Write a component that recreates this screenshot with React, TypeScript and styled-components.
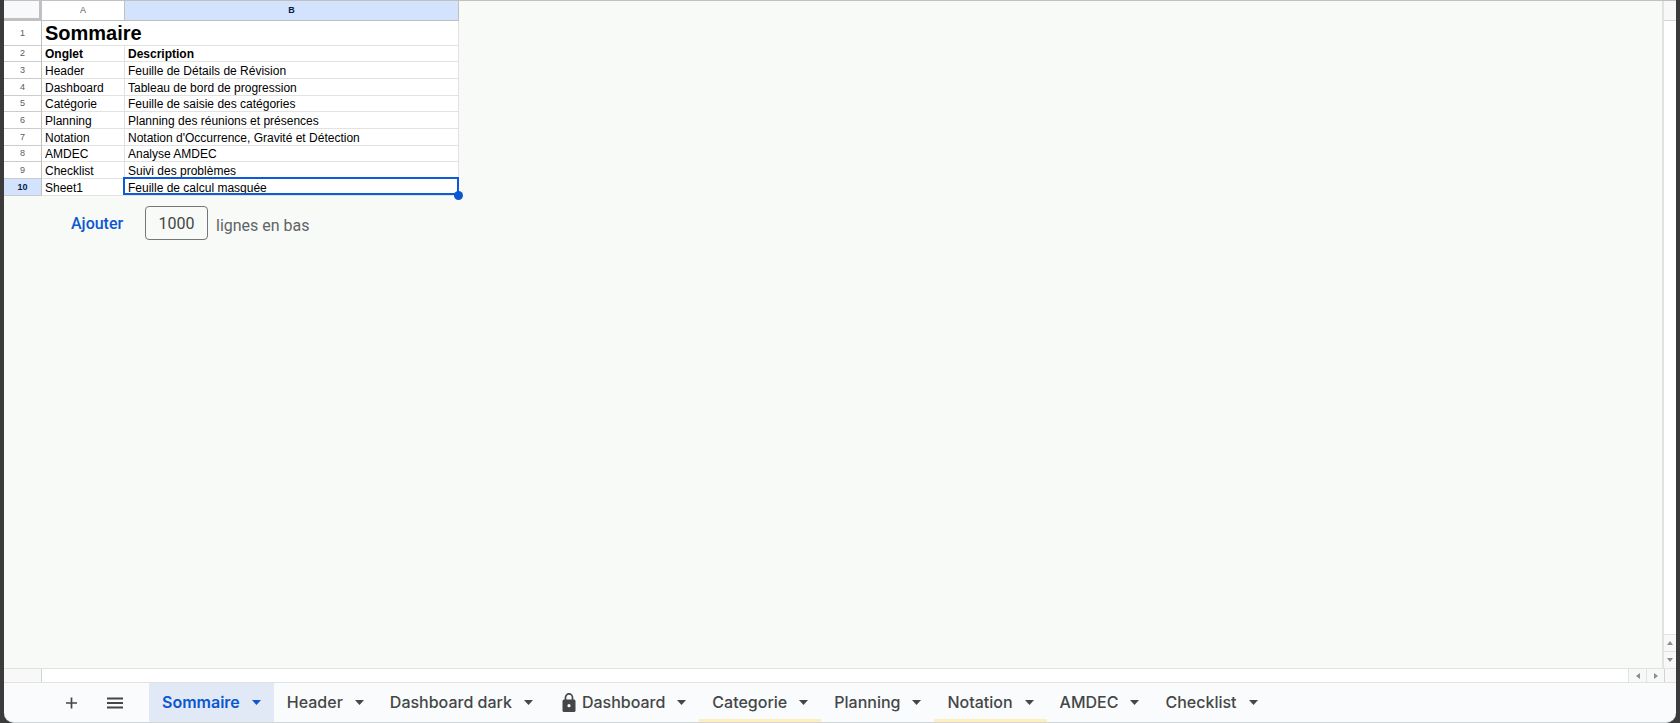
import React from "react";
import styled, { createGlobalStyle } from "styled-components";

const GlobalStyle = createGlobalStyle`
  *, *::before, *::after { box-sizing: border-box; }
  body { margin: 0; background: #3c3b3b; font-family: "Liberation Sans", Arial, sans-serif; }
  button, input { font: inherit; color: inherit; }
`;

const LINE = "#e1e3e1";

const Frame = styled.div`
  background: #3c3b3b;
  padding: 0 4px;
`;

const Window = styled.div`
  display: flex;
  flex-direction: column;
  min-height: 100vh;
  overflow: hidden;
  background: #f9fbfd;
  border-top: 1px solid #c0c0c0;
  border-bottom: 1px solid #d3d6d9;
  border-radius: 0 0 10px 10px;
`;

const Body = styled.div`
  flex: 1;
  display: flex;
`;

const Sheet = styled.main`
  flex: 1;
  background: #f8faf7;
`;

const Table = styled.table`
  table-layout: fixed;
  width: 455px;
  border-collapse: separate;
  border-spacing: 0;
  background: #fff;
  font-size: 12px;
  line-height: 13px;
  color: #000;
`;

const Corner = styled.td`
  width: 38px;
  height: 20px;
  padding: 0;
  background: #f8f9fa;
  border-right: 3px solid #c0c0c0;
  border-bottom: 3px solid #c0c0c0;
`;

const ColHead = styled.th<{ $active?: boolean; $width: number }>`
  width: ${(p) => p.$width}px;
  height: 20px;
  padding: 0 0 2px;
  font-size: 9px;
  line-height: 16px;
  font-weight: ${(p) => (p.$active ? 700 : 400)};
  color: ${(p) => (p.$active ? "#041e49" : "#575b5f")};
  background: ${(p) => (p.$active ? "#d3e3fd" : "#fff")};
  border-right: 1px solid #c0c0c0;
  border-bottom: 1px solid #c0c0c0;
`;

const RowHead = styled.th<{ $active?: boolean }>`
  padding: 0;
  font-size: 9px;
  line-height: 13px;
  vertical-align: middle;
  font-weight: ${(p) => (p.$active ? 700 : 400)};
  color: ${(p) => (p.$active ? "#041e49" : "#575b5f")};
  background: ${(p) => (p.$active ? "#d3e3fd" : "#fff")};
  border-right: 1px solid #c0c0c0;
  border-bottom: 1px solid #c9cbcc;
`;

const Cell = styled.td`
  position: relative;
  padding: 0 3px;
  vertical-align: bottom;
  white-space: nowrap;
  border-right: 1px solid ${LINE};
  border-bottom: 1px solid ${LINE};
`;

const Row = styled.tr<{ $kind?: "title" | "head" }>`
  height: 17px;
  font-weight: ${(p) => (p.$kind ? 700 : 400)};
  &:nth-child(3n + 2) { height: 16px; }
  &:first-child { height: 25px; font-size: 20px; line-height: 24px; }
`;

const Selection = styled.span`
  position: absolute;
  inset: -2px -1px 0 -2px;
  border: 2px solid #0b5bdc;
`;

const FillHandle = styled.span`
  position: absolute;
  right: -5px;
  bottom: -5px;
  width: 9px;
  height: 9px;
  border-radius: 50%;
  background: #0b57d0;
`;

const AddRows = styled.form`
  display: flex;
  align-items: center;
  padding: 10px 0 0 67px;
  font-family: Roboto, sans-serif;
  font-size: 16px;
  color: #5f6368;
`;

const AddButton = styled.button`
  padding: 0;
  width: 52px;
  border: 0;
  background: none;
  font-weight: 500;
  color: #0b57d0;
  cursor: pointer;
`;

const CountInput = styled.input`
  width: 63px;
  height: 34px;
  margin: 0 8px 0 22px;
  padding: 0;
  text-align: center;
  color: #444746;
  background: transparent;
  border: 1px solid #747775;
  border-radius: 4px;
`;

const AddLabel = styled.label`
  padding-top: 4px;
`;

const VScroll = styled.div`
  width: 14px;
  display: flex;
  flex-direction: column;
  background: #fff;
  border-left: 2px solid ${LINE};
`;

const VCap = styled.div`
  height: 20px;
  background: #f8f8f8;
  border-bottom: 1px solid #d5d7d8;
`;

const Track = styled.div`
  flex: 1;
`;

const ScrollButton = styled.button<{ $axis: "x" | "y" }>`
  display: flex;
  align-items: center;
  justify-content: center;
  padding: 0;
  width: ${(p) => (p.$axis === "x" ? "18px" : "100%")};
  height: ${(p) => (p.$axis === "x" ? "100%" : "17px")};
  background: #f8f8f8;
  color: #8b8d8e;
  border: 0 solid ${LINE};
  border-top-width: ${(p) => (p.$axis === "y" ? 1 : 0)}px;
  border-left-width: ${(p) => (p.$axis === "x" ? 1 : 0)}px;
`;

const HScroll = styled.div`
  display: flex;
  height: 14px;
  background: #fff;
  border-top: 1px solid ${LINE};
`;

const HCap = styled.div<{ $end?: boolean }>`
  width: ${(p) => (p.$end ? 12 : 38)}px;
  background: #f8f8f8;
  border: 0 solid #d0d2d3;
  border-width: ${(p) => (p.$end ? "0 0 0 1px" : "0 1px 0 0")};
`;

const TabBar = styled.nav`
  display: flex;
  height: 40px;
  border-top: 1px solid ${LINE};
  font-family: Inter, Roboto, sans-serif;
  font-size: 16px;
  color: #444746;
`;

const Tools = styled.div`
  display: flex;
  align-items: center;
  gap: 26px;
  width: 145px;
  padding-left: 59px;
`;

const IconButton = styled.button`
  display: flex;
  padding: 0;
  border: 0;
  background: none;
  cursor: pointer;
`;

const Tab = styled.button<{ $active?: boolean; $marked?: boolean }>`
  display: flex;
  align-items: center;
  padding: 2px 13px 0 13px;
  border: 0;
  border-bottom: 3px solid ${(p) => (p.$marked ? "#ffeebf" : p.$active ? "#e1e9f7" : "transparent")};
  background: ${(p) => (p.$active ? "#e1e9f7" : "transparent")};
  color: ${(p) => (p.$active ? "#0b57d0" : "inherit")};
  font-weight: ${(p) => (p.$active ? 600 : 500)};
  white-space: nowrap;
  cursor: pointer;
  svg:last-child { margin-left: 12px; }
`;

const rows: [string, string][] = [
  ["Sommaire", ""],
  ["Onglet", "Description"],
  ["Header", "Feuille de Détails de Révision"],
  ["Dashboard", "Tableau de bord de progression"],
  ["Catégorie", "Feuille de saisie des catégories"],
  ["Planning", "Planning des réunions et présences"],
  ["Notation", "Notation d'Occurrence, Gravité et Détection"],
  ["AMDEC", "Analyse AMDEC"],
  ["Checklist", "Suivi des problèmes"],
  ["Sheet1", "Feuille de calcul masquée"],
];

const tabs: { name: string; active?: boolean; marked?: boolean; locked?: boolean }[] = [
  { name: "Sommaire", active: true },
  { name: "Header" },
  { name: "Dashboard dark" },
  { name: "Dashboard", locked: true },
  { name: "Categorie", marked: true },
  { name: "Planning" },
  { name: "Notation", marked: true },
  { name: "AMDEC" },
  { name: "Checklist" },
];

const ARROWS = {
  up: "M0 5 L3 1 L6 5 Z",
  down: "M0 1 L3 5 L6 1 Z",
  left: "M5 0 L1 3 L5 6 Z",
  right: "M1 0 L5 3 L1 6 Z",
};

const Arrow = ({ dir }: { dir: keyof typeof ARROWS }) => (
  <svg width="6" height="6" viewBox="0 0 6 6" fill="currentColor" aria-hidden="true">
    <path d={ARROWS[dir]} />
  </svg>
);

const Caret = () => (
  <svg width="9" height="5" viewBox="0 0 9 5" fill="currentColor" aria-hidden="true">
    <path d="M0 0 H9 L4.5 5 Z" />
  </svg>
);

const Lock = () => (
  <svg width="23" height="19" viewBox="-3 0 23 19" aria-hidden="true">
    <path d="M3.5 8 V4.600 a3.500 3.700 0 0 1 7 0 V8" fill="none" stroke="#444746" strokeWidth="1.700" />
    <rect x="0.500" y="6.500" width="13" height="12.500" rx="1.500" fill="#444746" />
    <circle cx="7" cy="12.700" r="1.600" fill="#f9fbfd" />
  </svg>
);

export default function App() {
  return (
    <Frame>
      <GlobalStyle />
      <Window>
        <Body>
          <Sheet>
            <Table>
              <thead>
                <tr>
                  <Corner />
                  <ColHead scope="col" $width={83}>A</ColHead>
                  <ColHead scope="col" $width={334} $active>B</ColHead>
                </tr>
              </thead>
              <tbody>
                {rows.map(([name, text], i) => {
                  const selected = i === rows.length - 1;
                  return (
                    <Row key={name} $kind={i === 0 ? "title" : i === 1 ? "head" : undefined}>
                      <RowHead scope="row" $active={selected}>{i + 1}</RowHead>
                      {i === 0 ? (
                        <Cell colSpan={2}>{name}</Cell>
                      ) : (
                        <>
                          <Cell>{name}</Cell>
                          <Cell>
                            {text}
                            {selected && <Selection />}
                            {selected && <FillHandle />}
                          </Cell>
                        </>
                      )}
                    </Row>
                  );
                })}
              </tbody>
            </Table>
            <AddRows onSubmit={(e) => e.preventDefault()}>
              <AddButton type="submit">Ajouter</AddButton>
              <CountInput id="count" defaultValue="1000" />
              <AddLabel htmlFor="count">lignes en bas</AddLabel>
            </AddRows>
          </Sheet>
          <VScroll>
            <VCap />
            <Track />
            <ScrollButton $axis="y" aria-label="Défiler vers le haut"><Arrow dir="up" /></ScrollButton>
            <ScrollButton $axis="y" aria-label="Défiler vers le bas"><Arrow dir="down" /></ScrollButton>
          </VScroll>
        </Body>
        <HScroll>
          <HCap />
          <Track />
          <ScrollButton $axis="x" aria-label="Défiler vers la gauche"><Arrow dir="left" /></ScrollButton>
          <ScrollButton $axis="x" aria-label="Défiler vers la droite"><Arrow dir="right" /></ScrollButton>
          <HCap $end />
        </HScroll>
        <TabBar>
          <Tools>
            <IconButton aria-label="Ajouter une feuille">
              <svg width="18" height="16" viewBox="0 0 18 16" stroke="#444746" strokeWidth="1.7" aria-hidden="true">
                <path d="M3 8 H14 M8.500 2.500 V13.500" />
              </svg>
            </IconButton>
            <IconButton aria-label="Toutes les feuilles">
              <svg width="16" height="12" viewBox="0 0 16 12" stroke="#444746" strokeWidth="1.9" aria-hidden="true">
                <path d="M0 1.500 H16 M0 6 H16 M0 10.500 H16" />
              </svg>
            </IconButton>
          </Tools>
          {tabs.map((t) => (
            <Tab key={t.name} $active={t.active} $marked={t.marked}>
              {t.locked && <Lock />}
              {t.name}
              <Caret />
            </Tab>
          ))}
        </TabBar>
      </Window>
    </Frame>
  );
}
